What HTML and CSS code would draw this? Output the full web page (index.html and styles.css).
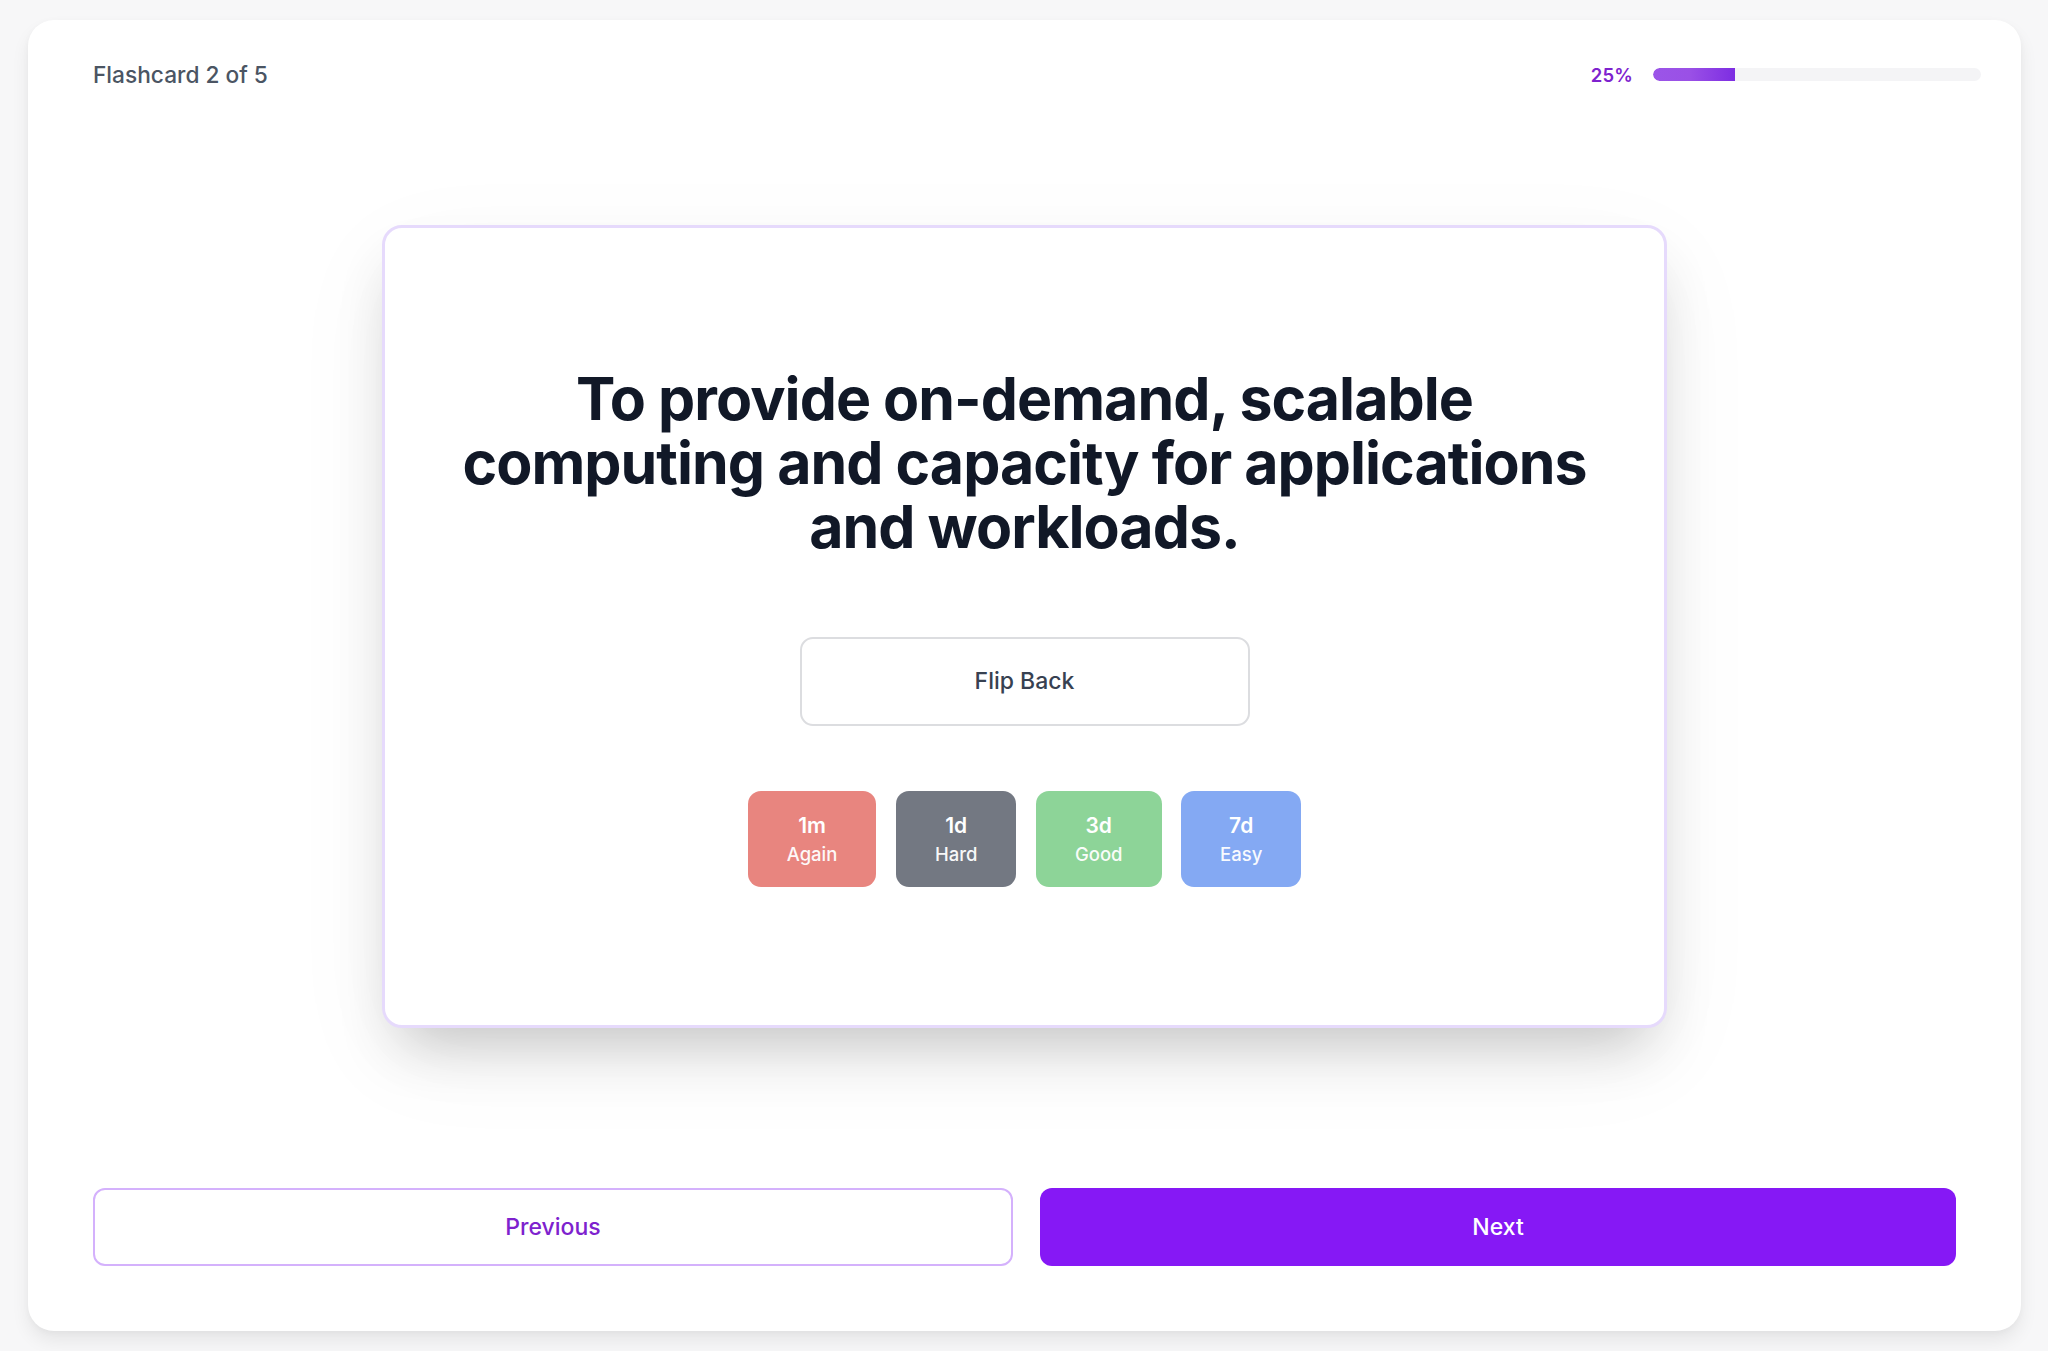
FILE: index.html
```html
<!DOCTYPE html>
<html lang="en">
<head>
<meta charset="utf-8">
<title>Flashcards</title>
<link rel="stylesheet" href="styles.css">
</head>
<body>
  <main class="shell">
    <header class="topbar">
      <span class="counter">Flashcard 2 of 5</span>
      <div class="progress">
        <span class="pct">25%</span>
        <div class="track"><div class="fill" style="width:25%"></div></div>
      </div>
    </header>

    <section class="card">
      <h1 class="answer">To provide on-demand, scalable computing and capacity for applications and workloads.</h1>
      <button class="flip">Flip Back</button>
      <div class="ratings">
        <button class="rate again"><span class="interval">1m</span><span class="label">Again</span></button>
        <button class="rate hard"><span class="interval">1d</span><span class="label">Hard</span></button>
        <button class="rate good"><span class="interval">3d</span><span class="label">Good</span></button>
        <button class="rate easy"><span class="interval">7d</span><span class="label">Easy</span></button>
      </div>
    </section>

    <nav class="pager">
      <button class="nav-btn prev">Previous</button>
      <button class="nav-btn next">Next</button>
    </nav>
  </main>
</body>
</html>
```
FILE: styles.css
```css
* { box-sizing: border-box; }

html, body {
  margin: 0;
  height: 100%;
}

body {
  background: #f7f7f8;
  padding: 20px 27px 20px 28px;
  font-family: Inter, "Noto Sans", "Liberation Sans", sans-serif;
  color: #111827;
}

.shell {
  background: #ffffff;
  border-radius: 26px;
  box-shadow: 0 10px 18px rgba(0, 0, 0, 0.07), 0 2px 6px rgba(0, 0, 0, 0.03);
  padding: 37px 65px 65px;
  display: flex;
  flex-direction: column;
  height: 1311px;
}

.topbar {
  display: flex;
  justify-content: space-between;
  align-items: center;
  height: 35px;
  margin-right: -25px;
}

.counter {
  font-size: 22.7px;
  font-weight: 450;
  color: #4b5563;
}

.progress {
  display: flex;
  align-items: center;
  gap: 20px;
}

.pct {
  font-size: 18.5px;
  font-weight: 600;
  color: #7e22ce;
  letter-spacing: 0.2px;
}

.track {
  width: 328px;
  height: 13px;
  border-radius: 999px;
  background: #f4f4f6;
  overflow: hidden;
}

.fill {
  height: 100%;
  background: linear-gradient(90deg, #9b55e8 0%, #9a50e6 45%, #7d2de2 100%);
  border-radius: 999px 0 0 999px;
}

.card {
  width: 1285px;
  height: 803px;
  margin: 133px auto 160px;
  background: #ffffff;
  border: 3px solid #e6dafc;
  border-radius: 20px;
  box-shadow: 0 32px 60px -18px rgba(0, 0, 0, 0.22), 0 30px 110px rgba(0, 0, 0, 0.045);
  display: flex;
  flex-direction: column;
  align-items: center;
  justify-content: center;
  padding: 0 52px;
}

.answer {
  margin: 0;
  font-size: 59px;
  line-height: 64px;
  font-weight: 700;
  text-align: center;
  color: #111827;
  letter-spacing: -0.95px;
}

.flip {
  margin-top: 78px;
  width: 450px;
  height: 89px;
  background: #ffffff;
  border: 2px solid #dcdde0;
  border-radius: 13px;
  font-family: inherit;
  font-size: 23px;
  font-weight: 500;
  color: #374151;
}

.ratings {
  margin-top: 65px;
  display: flex;
  gap: 19.5px;
}

.rate {
  border: 0;
  border-radius: 13px;
  padding: 20px 39px 18px;
  display: flex;
  flex-direction: column;
  align-items: center;
  font-family: inherit;
  color: #ffffff;
  height: 96px;
}

.interval {
  font-size: 21px;
  line-height: 29px;
  font-weight: 600;
}

.label {
  font-size: 18.5px;
  line-height: 29px;
  font-weight: 450;
  opacity: 0.95;
}

.again { background: #e8857f; }
.hard  { background: #737882; }
.good  { background: #8dd498; }
.easy  { background: #84a9f3; }

.pager {
  display: flex;
  gap: 27px;
}

.nav-btn {
  flex: 1;
  height: 78px;
  border-radius: 12px;
  font-family: inherit;
  font-size: 23px;
  font-weight: 500;
}

.prev {
  background: #ffffff;
  border: 2px solid #d4b1fc;
  color: #7e22ce;
}

.next {
  background: #8618f5;
  border: 0;
  color: #ffffff;
}
```
